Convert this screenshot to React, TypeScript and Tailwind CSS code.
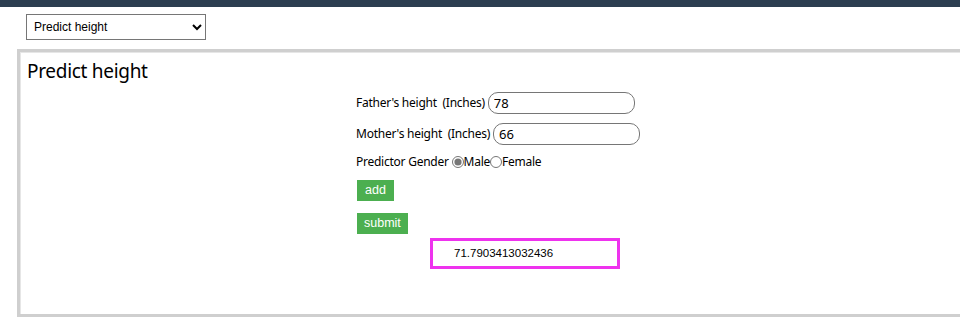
import { useState } from 'react';

export default function App() {
  const [father, setFather] = useState('78');
  const [mother, setMother] = useState('66');
  const [gender, setGender] = useState('male');

  return (
    <div className="w-[960px] h-[323px] overflow-hidden bg-white text-black">
      <div className="h-[7px] bg-[#2c3e50]" />
      <div className="pl-[26px] pt-[6px]">
        <select
          className="w-[180px] h-[26px] border border-[#767676] bg-white pl-[3px] pr-[2px] text-[12px] font-['Liberation_Sans',Arial,sans-serif] text-black"
          defaultValue="height"
        >
          <option value="height">Predict height</option>
        </select>
      </div>
      <div className="ml-[17px] mt-[9px] w-[960px] h-[268px] border-[3px] border-r-0 border-[#cfcfcf] shadow-[inset_1px_1px_0_#e6e6e6] font-['Noto_Sans','Open_Sans',sans-serif]">
        <h2 className="ml-[7px] mt-[7px] text-[19px] leading-[24px] tracking-[-0.3px] text-black">Predict height</h2>
        <div className="ml-[336px] mt-[9px] flex flex-col items-start text-[12px] tracking-[-0.25px]">
          <div className="flex items-center h-[22px]">
            <span>Father's height&nbsp; (Inches)&nbsp;</span>
            <input
              value={father}
              onChange={(e) => setFather(e.target.value)}
              className="w-[147px] h-[22px] rounded-[10px] border border-[#767676] px-[5px] text-[13px] tracking-normal outline-none"
            />
          </div>
          <div className="flex items-center h-[22px] mt-[9px]">
            <span>Mother's height&nbsp; (Inches)&nbsp;</span>
            <input
              value={mother}
              onChange={(e) => setMother(e.target.value)}
              className="w-[147px] h-[22px] rounded-[10px] border border-[#767676] px-[5px] text-[13px] tracking-normal outline-none"
            />
          </div>
          <div className="flex items-center mt-[8px] h-[18px]">
            <span>Predictor Gender&nbsp;</span>
            <input
              type="radio"
              name="g"
              checked={gender === 'male'}
              onChange={() => setGender('male')}
              className="m-0 w-[12px] h-[12px] accent-[#767676]"
            />
            <span>Male</span>
            <input
              type="radio"
              name="g"
              checked={gender === 'female'}
              onChange={() => setGender('female')}
              className="m-0 w-[12px] h-[12px] accent-[#767676]"
            />
            <span>Female</span>
          </div>
          <button className="mt-[9px] ml-[1px] h-[21px] px-[8px] bg-[#4caf50] text-white text-[12.5px] tracking-normal font-['Liberation_Sans',Arial,sans-serif]">
            add
          </button>
          <button className="mt-[12px] ml-[1px] h-[21px] px-[7px] bg-[#4caf50] text-white text-[12.5px] tracking-normal font-['Liberation_Sans',Arial,sans-serif]">
            submit
          </button>
          <div className="ml-[74px] mt-[4px] w-[190px] h-[31px] border-[3px] border-[#ee33ee] pl-[21px] flex items-center text-[11.5px] tracking-normal font-['Liberation_Sans',Arial,sans-serif]">
            71.7903413032436
          </div>
        </div>
      </div>
    </div>
  );
}
